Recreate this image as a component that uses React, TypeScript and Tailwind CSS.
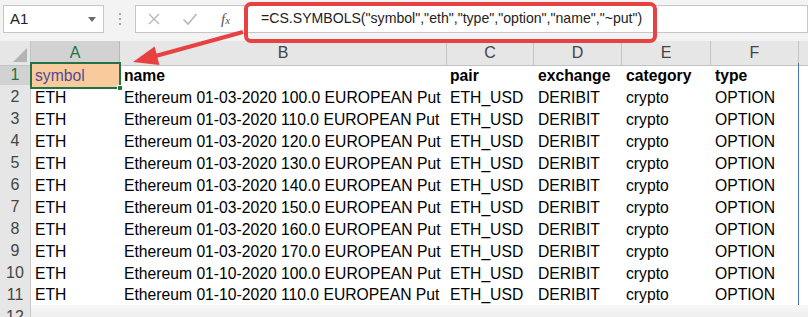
import React from "react";

const strikes: [string, string][] = [
  ["01-03-2020", "100.0"],
  ["01-03-2020", "110.0"],
  ["01-03-2020", "120.0"],
  ["01-03-2020", "130.0"],
  ["01-03-2020", "140.0"],
  ["01-03-2020", "150.0"],
  ["01-03-2020", "160.0"],
  ["01-03-2020", "170.0"],
  ["01-10-2020", "100.0"],
  ["01-10-2020", "110.0"],
];

const cols = "grid grid-cols-[31px_89px_327px_87px_88px_89px_88px_1fr]";

function HeaderCell({ label, selected }: { label: string; selected?: boolean }) {
  return (
    <div
      className={
        selected
          ? "h-full flex items-center justify-center bg-[#d2d2d2] border-r border-b border-[#b9b9b9] text-[#217346]"
          : "h-full flex items-center justify-center bg-[#e6e6e6] border-r border-b border-[#c3c3c3] text-[#444]"
      }
    >
      {label}
    </div>
  );
}

function RowHead({ n, selected }: { n: number; selected?: boolean }) {
  return (
    <div
      className={
        selected
          ? "h-full flex items-center justify-center bg-[#d2d2d2] border-r border-b border-[#b9b9b9] text-[#217346] text-[16px]"
          : "h-full flex items-center justify-center bg-[#e6e6e6] border-r border-b border-[#c8c8c8] text-[#444] text-[16px]"
      }
    >
      {n}
    </div>
  );
}

export default function App() {
  return (
    <div
      className="relative w-[808px] h-[317px] overflow-hidden bg-white text-black"
      style={{ fontFamily: '"Liberation Sans", Arial, sans-serif' }}
    >
      {/* top bar */}
      <div className="flex h-[41px] bg-[#f3f3f3] pt-[5px]">
        <div className="ml-[3px] w-[101px] h-[28px] bg-white border border-[#c6c6c6] flex items-center justify-between pl-[6px] pr-[7px]">
          <span className="text-[15px] text-[#222]">A1</span>
          <span className="w-0 h-0 border-l-[4px] border-r-[4px] border-t-[5px] border-l-transparent border-r-transparent border-t-[#6a6a6a]" />
        </div>
        <div className="w-[31px] flex flex-col items-center justify-center gap-[3px] h-[28px]">
          <span className="w-[2px] h-[2px] bg-[#a8a8a8]" />
          <span className="w-[2px] h-[2px] bg-[#a8a8a8]" />
          <span className="w-[2px] h-[2px] bg-[#a8a8a8]" />
        </div>
        <div className="w-[110px] h-[28px] bg-white border border-[#c6c6c6] flex items-center">
          <svg width="14" height="14" viewBox="0 0 14 14" className="ml-[11px]">
            <path d="M2 2 L12 12 M12 2 L2 12" stroke="#b8b8b8" strokeWidth="1.4" />
          </svg>
          <svg width="16" height="14" viewBox="0 0 16 14" className="ml-[21px]">
            <path d="M1.5 7.5 L6 12 L14.5 2" stroke="#b8b8b8" strokeWidth="1.6" fill="none" />
          </svg>
          <span
            className="ml-[23px] text-[15px] italic text-[#555]"
            style={{ fontFamily: '"Liberation Serif", "Times New Roman", serif' }}
          >
            f<span className="text-[11px]">x</span>
          </span>
        </div>
        <div className="flex-1 h-[28px] bg-white border-y border-r border-[#c6c6c6] flex items-center pl-[16px]">
          <span className="text-[14.1px] text-[#222] whitespace-nowrap">
            =CS.SYMBOLS("symbol","eth","type","option","name","~put")
          </span>
        </div>
      </div>

      {/* column headers */}
      <div className={`${cols} h-[22px] text-[16px]`}>
        <div className="h-full bg-[#e6e6e6] border-r border-b border-[#c3c3c3] relative">
          <svg width="14" height="14" viewBox="0 0 14 14" className="absolute right-[3px] bottom-[3px]">
            <polygon points="14,0 14,14 0,14" fill="#b4b4b4" />
          </svg>
        </div>
        <HeaderCell label="A" selected />
        <HeaderCell label="B" />
        <HeaderCell label="C" />
        <HeaderCell label="D" />
        <HeaderCell label="E" />
        <HeaderCell label="F" />
        <div className="h-full bg-[#e6e6e6] border-b border-[#c3c3c3]" />
      </div>

      {/* row 1 */}
      <div className={`${cols} h-[22px] text-[15.7px]`}>
        <RowHead n={1} selected />
        <div className="h-full bg-[#f9cb9c] flex items-center pl-[4px] text-[#4f4a99] relative">
          symbol
          <div className="absolute -left-[1px] -top-[1px] -right-[1px] -bottom-[1px] border-2 border-[#217346]" />
          <div className="absolute -right-[3px] -bottom-[3px] w-[6px] h-[6px] bg-[#217346] border border-white" />
        </div>
        <div className="h-full flex items-center pl-[4px] font-bold">name</div>
        <div className="h-full flex items-center pl-[3px] font-bold">pair</div>
        <div className="h-full flex items-center pl-[4px] font-bold">exchange</div>
        <div className="h-full flex items-center pl-[4px] font-bold">category</div>
        <div className="h-full flex items-center pl-[4px] font-bold border-r border-[#4472c4]">type</div>
        <div className="h-full" />
      </div>

      {/* data rows */}
      {strikes.map(([date, strike], i) => {
        const last = i === strikes.length - 1;
        return (
          <div key={i} className={`${cols} h-[22px] text-[15.7px] whitespace-nowrap`}>
            <RowHead n={i + 2} />
            <div className={last ? "h-full flex items-center pl-[4px] border-b border-[#4472c4]" : "h-full flex items-center pl-[4px]"}>ETH</div>
            <div className={last ? "h-full flex items-center pl-[4px] border-b border-[#4472c4]" : "h-full flex items-center pl-[4px]"}>
              Ethereum {date} {strike} EUROPEAN Put
            </div>
            <div className={last ? "h-full flex items-center pl-[3px] border-b border-[#4472c4]" : "h-full flex items-center pl-[3px]"}>ETH_USD</div>
            <div className={last ? "h-full flex items-center pl-[4px] border-b border-[#4472c4]" : "h-full flex items-center pl-[4px]"}>DERIBIT</div>
            <div className={last ? "h-full flex items-center pl-[4px] border-b border-[#4472c4]" : "h-full flex items-center pl-[4px]"}>crypto</div>
            <div className={last ? "h-full flex items-center pl-[4px] border-b border-r border-[#4472c4]" : "h-full flex items-center pl-[4px] border-r border-[#4472c4]"}>OPTION</div>
            <div className="h-full" />
          </div>
        );
      })}

      {/* row 12 */}
      <div className={`${cols} h-[22px]`}>
        <RowHead n={12} />
        <div className="col-span-7 h-full bg-gradient-to-b from-[#f7f7f7] to-[#e6e6e6]" />
      </div>

      {/* red arrow */}
      <svg className="absolute left-0 top-0 pointer-events-none" width="808" height="317">
        <line x1="243" y1="32" x2="152" y2="57" stroke="#e84142" strokeWidth="4" />
        <polygon points="133,62 159.5,65 154.6,46.5" fill="#e84142" />
      </svg>

      {/* red highlight box */}
      <div className="absolute left-[244px] top-[2px] w-[413px] h-[41px] border-4 border-[#e84142] rounded-[7px] pointer-events-none" />
    </div>
  );
}
